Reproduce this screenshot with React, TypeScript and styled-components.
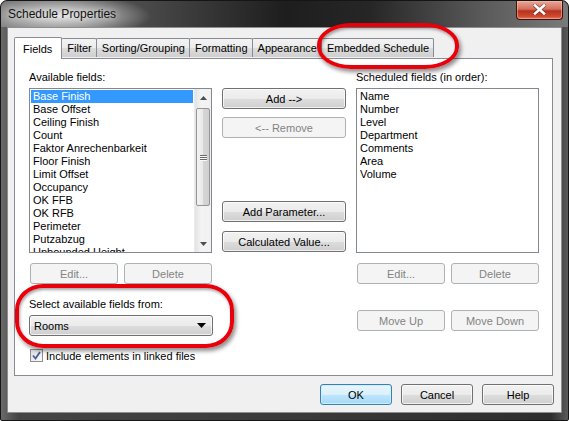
import React from 'react'
import styled, { createGlobalStyle, css } from 'styled-components'

const GlobalStyle = createGlobalStyle`
  html, body {
    margin: 0;
    padding: 0;
    width: 569px;
    height: 421px;
    overflow: hidden;
    background: #ffffff;
  }
  * { box-sizing: border-box; }
`

const availableFields = [
  'Base Finish',
  'Base Offset',
  'Ceiling Finish',
  'Count',
  'Faktor Anrechenbarkeit',
  'Floor Finish',
  'Limit Offset',
  'Occupancy',
  'OK FFB',
  'OK RFB',
  'Perimeter',
  'Putzabzug',
  'Unbounded Height',
]

const scheduledFields = ['Name', 'Number', 'Level', 'Department', 'Comments', 'Area', 'Volume']

const tabs = ['Fields', 'Filter', 'Sorting/Grouping', 'Formatting', 'Appearance', 'Embedded Schedule']

const Window = styled.div`
  position: relative;
  width: 569px;
  height: 421px;
  display: flex;
  flex-direction: column;
  padding: 0 6px 7px 6px;
  background: linear-gradient(to right, #6a6a6a 0%, #454545 3%, #3a3a3a 50%, #2e2e2e 97%, #5a5a5a 100%);
  border: 1px solid #151515;
  border-radius: 7px 7px 2px 2px;
  font-family: 'Liberation Sans', Arial, sans-serif;
  font-size: 11px;
  color: #000;
`

const TitleBar = styled.div`
  height: 28px;
  display: flex;
  align-items: center;
  justify-content: space-between;
  margin: 0 -6px;
  padding: 0 6px 0 7px;
  background:
    radial-gradient(ellipse 90px 22px at 60px 15px, rgba(235, 235, 235, 0.95) 0%, rgba(200, 200, 200, 0.6) 55%, rgba(120, 120, 120, 0) 100%),
    linear-gradient(to right, #6e6e6e 0%, #4a4a4a 25%, #1e1e1e 50%, #262626 65%, #5a5a5a 85%, #7a7a7a 100%);
  border-radius: 7px 7px 0 0;
`

const Title = styled.span`
  font-size: 12px;
  color: #111;
  text-shadow: 0 0 6px rgba(255, 255, 255, 0.9);
  margin-top: -1px;
`

const CloseButton = styled.div`
  width: 47px;
  height: 19px;
  margin-top: -8px;
  margin-right: -1px;
  display: flex;
  align-items: center;
  justify-content: center;
  border: 1px solid #3a1410;
  border-top: none;
  border-radius: 0 0 4px 4px;
  background: linear-gradient(to bottom, #e8a899 0%, #d4705c 45%, #b8321e 55%, #cf4a30 85%, #e67a5e 100%);
  box-shadow: inset 0 0 0 1px rgba(255, 200, 180, 0.5);
`

const Client = styled.div`
  flex: 1;
  display: flex;
  flex-direction: column;
  padding: 8px 8px 7px 6px;
  background: #f0f0f0;
  border: 1px solid #8e8e8e;
`

const TabRow = styled.div`
  display: flex;
  align-items: flex-end;
  height: 22px;
  padding-left: 2px;
  position: relative;
  z-index: 1;
`

const Tab = styled.div<{ $active?: boolean }>`
  height: 19px;
  padding: 0 4px 0 5px;
  display: flex;
  align-items: center;
  border: 1px solid #898c95;
  border-bottom: none;
  margin-right: -1px;
  border-radius: 2px 2px 0 0;
  background: linear-gradient(to bottom, #f3f3f3 0%, #ebebeb 50%, #dddddd 51%, #cfcfcf 100%);
  margin-bottom: 1px;
  white-space: nowrap;
  ${({ $active }) =>
    $active &&
    css`
      height: 22px;
      margin: 0 -1px 0 -2px;
      padding: 0 9px 0 8px;
      background: #ffffff;
      margin-bottom: -1px;
      position: relative;
      z-index: 2;
    `}
`

const Panel = styled.div`
  height: 318px;
  background: #ffffff;
  border: 1px solid #898c95;
  display: grid;
  grid-template-columns: 183px 124px 183px;
  column-gap: 10px;
  padding: 12px 0 0 14px;
`

const Column = styled.div`
  display: flex;
  flex-direction: column;
`

const Middle = styled.div`
  display: flex;
  flex-direction: column;
  padding-top: 17px;
  width: 124px;
  margin-right: 1px;
`

const Label = styled.div<{ $top?: number }>`
  height: 13px;
  line-height: 13px;
  margin-top: ${({ $top }) => $top ?? 0}px;
  margin-bottom: 4px;
  white-space: nowrap;
`

const ListBox = styled.div`
  height: 165px;
  border: 1px solid #828790;
  background: #fff;
  display: flex;
  overflow: hidden;
`

const Items = styled.div`
  flex: 1;
  padding: 1px 1px 0 1px;
  overflow: hidden;
`

const Item = styled.div<{ $selected?: boolean }>`
  height: 13px;
  line-height: 13px;
  padding-left: 2px;
  white-space: nowrap;
  ${({ $selected }) =>
    $selected &&
    css`
      background: #3399ff;
      color: #fff;
    `}
`

const ScrollBar = styled.div`
  width: 17px;
  display: flex;
  flex-direction: column;
  background: linear-gradient(to right, #e3e3e3, #f4f4f4 40%, #f0f0f0);
  border-left: 1px solid #eaeaea;
`

const ScrollArrow = styled.div`
  height: 17px;
  display: flex;
  align-items: center;
  justify-content: center;
`

const Track = styled.div`
  flex: 1;
  padding: 2px 1px;
  display: flex;
  flex-direction: column;
`

const Thumb = styled.div`
  height: 98px;
  border: 1px solid #959595;
  border-radius: 2px;
  background: linear-gradient(to right, #f3f3f3 0%, #e8e8e8 50%, #d6d6d6 51%, #cfcfcf 100%);
  display: flex;
  flex-direction: column;
  align-items: center;
  justify-content: center;
  gap: 1px;
`

const Grip = styled.div`
  width: 7px;
  height: 1px;
  background: #6a6a6a;
  box-shadow: 0 1px 0 #f8f8f8;
`

const Button = styled.div<{ $disabled?: boolean; $default?: boolean; $w?: number }>`
  width: ${({ $w }) => ($w ? `${$w}px` : '100%')};
  height: 21px;
  display: flex;
  align-items: center;
  justify-content: center;
  border: 1px solid #707070;
  border-radius: 3px;
  background: linear-gradient(to bottom, #f2f2f2 0%, #ebebeb 50%, #dddddd 51%, #cfcfcf 100%);
  box-shadow: inset 0 0 0 1px rgba(255, 255, 255, 0.7);
  white-space: nowrap;
  ${({ $disabled }) =>
    $disabled &&
    css`
      border-color: #adb2b5;
      background: #f4f4f4;
      color: #838383;
      box-shadow: none;
    `}
  ${({ $default }) =>
    $default &&
    css`
      border-color: #3c7fb1;
      background: linear-gradient(to bottom, #eaf6fd 0%, #d9f0fc 50%, #bee6fd 51%, #a7d9f5 100%);
      box-shadow: inset 0 0 0 1px rgba(200, 240, 255, 0.9);
    `}
`

const ButtonPair = styled.div<{ $top: number }>`
  display: flex;
  justify-content: space-between;
  margin-top: ${({ $top }) => $top}px;
  padding-left: 1px;
`

const MiddleGap = styled.div<{ $h: number }>`
  height: ${({ $h }) => $h}px;
  flex: none;
`

const Combo = styled.div`
  height: 21px;
  width: 184px;
  display: flex;
  align-items: center;
  justify-content: space-between;
  padding: 0 6px 0 4px;
  border: 1px solid #707070;
  border-radius: 3px;
  background: linear-gradient(to bottom, #f2f2f2 0%, #ebebeb 50%, #dddddd 51%, #cfcfcf 100%);
  box-shadow: inset 0 0 0 1px rgba(255, 255, 255, 0.7);
`

const CheckRow = styled.div`
  display: flex;
  align-items: center;
  gap: 3px;
  margin-top: 13px;
  padding-left: 1px;
`

const CheckBox = styled.div`
  width: 13px;
  height: 13px;
  border: 1px solid #8f8f8f;
  background: linear-gradient(135deg, #dcdcdc, #fbfbfb);
  display: flex;
  align-items: center;
  justify-content: center;
`

const Footer = styled.div`
  display: flex;
  justify-content: flex-end;
  gap: 9px;
  margin-top: 8px;
  margin-right: -1px;
`

const Annotation = styled.div<{ $x: number; $y: number; $w: number; $h: number; $r: string }>`
  position: absolute;
  left: ${({ $x }) => $x}px;
  top: ${({ $y }) => $y}px;
  width: ${({ $w }) => $w}px;
  height: ${({ $h }) => $h}px;
  border: 4px solid #e8000b;
  border-radius: ${({ $r }) => $r};
  box-shadow: 2px 3px 4px rgba(0, 0, 0, 0.45), inset 1px 2px 3px rgba(0, 0, 0, 0.35);
  pointer-events: none;
  z-index: 10;
`

const UpArrow = () => (
  <svg width="7" height="4" viewBox="0 0 7 4">
    <path d="M0 4 L3.5 0 L7 4 Z" fill="#4d4d4d" />
  </svg>
)

const DownArrow = ({ color = '#4d4d4d', w = 7, h = 4 }: { color?: string; w?: number; h?: number }) => (
  <svg width={w} height={h} viewBox={`0 0 ${w} ${h}`}>
    <path d={`M0 0 L${w} 0 L${w / 2} ${h} Z`} fill={color} />
  </svg>
)

export default function App() {
  return (
    <>
      <GlobalStyle />
      <Window>
        <TitleBar>
          <Title>Schedule Properties</Title>
          <CloseButton>
            <svg width="13" height="11" viewBox="0 0 13 11">
              <path d="M2 1.5 L11 9.5 M11 1.5 L2 9.5" stroke="#3a1a14" strokeWidth="4" strokeLinecap="square" opacity="0.5" />
              <path d="M2 1.5 L11 9.5 M11 1.5 L2 9.5" stroke="#ffffff" strokeWidth="2.6" strokeLinecap="square" />
            </svg>
          </CloseButton>
        </TitleBar>
        <Client>
          <TabRow>
            {tabs.map((t, i) => (
              <Tab key={t} $active={i === 0}>
                {t}
              </Tab>
            ))}
          </TabRow>
          <Panel>
            <Column>
              <Label>Available fields:</Label>
              <ListBox>
                <Items>
                  {availableFields.map((f, i) => (
                    <Item key={f} $selected={i === 0}>
                      {f}
                    </Item>
                  ))}
                </Items>
                <ScrollBar>
                  <ScrollArrow>
                    <UpArrow />
                  </ScrollArrow>
                  <Track>
                    <Thumb>
                      <Grip />
                      <Grip />
                      <Grip />
                    </Thumb>
                  </Track>
                  <ScrollArrow>
                    <DownArrow />
                  </ScrollArrow>
                </ScrollBar>
              </ListBox>
              <ButtonPair $top={10}>
                <Button $disabled $w={88}>Edit...</Button>
                <Button $disabled $w={88}>Delete</Button>
              </ButtonPair>
              <Label $top={14}>Select available fields from:</Label>
              <Combo>
                <span>Rooms</span>
                <DownArrow color="#000" w={9} h={5} />
              </Combo>
              <CheckRow>
                <CheckBox>
                  <svg width="9" height="9" viewBox="0 0 9 9">
                    <path d="M1 4.5 L3.5 7.5 L8 1" stroke="#4a5f97" strokeWidth="1.8" fill="none" />
                  </svg>
                </CheckBox>
                <span>Include elements in linked files</span>
              </CheckRow>
            </Column>
            <Middle>
              <Button>Add --&gt;</Button>
              <MiddleGap $h={8} />
              <Button $disabled>&lt;-- Remove</Button>
              <MiddleGap $h={63} />
              <Button>Add Parameter...</Button>
              <MiddleGap $h={9} />
              <Button>Calculated Value...</Button>
            </Middle>
            <Column>
              <Label>Scheduled fields (in order):</Label>
              <ListBox>
                <Items>
                  {scheduledFields.map((f) => (
                    <Item key={f}>{f}</Item>
                  ))}
                </Items>
              </ListBox>
              <ButtonPair $top={10}>
                <Button $disabled $w={88}>Edit...</Button>
                <Button $disabled $w={88}>Delete</Button>
              </ButtonPair>
              <ButtonPair $top={26}>
                <Button $disabled $w={88}>Move Up</Button>
                <Button $disabled $w={88}>Move Down</Button>
              </ButtonPair>
            </Column>
          </Panel>
          <Footer>
            <Button $default $w={72}>OK</Button>
            <Button $w={72}>Cancel</Button>
            <Button $w={72}>Help</Button>
          </Footer>
        </Client>
        <Annotation $x={316} $y={22} $w={142} $h={46} $r="34px / 22px" />
        <Annotation $x={14} $y={283} $w={219} $h={64} $r="28px / 26px" />
      </Window>
    </>
  )
}
